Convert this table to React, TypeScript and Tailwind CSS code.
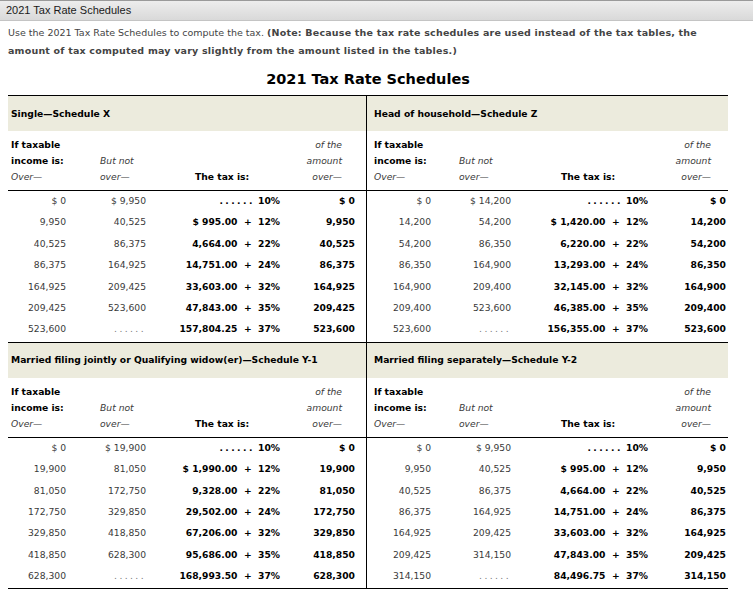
import React from "react";

type Row = [string, string, string, string | null, string];

const single: Row[] = [
  ["$ 0", "$ 9,950", "", "10%", "$ 0"],
  ["9,950", "40,525", "$ 995.00", "12%", "9,950"],
  ["40,525", "86,375", "4,664.00", "22%", "40,525"],
  ["86,375", "164,925", "14,751.00", "24%", "86,375"],
  ["164,925", "209,425", "33,603.00", "32%", "164,925"],
  ["209,425", "523,600", "47,843.00", "35%", "209,425"],
  ["523,600", "", "157,804.25", "37%", "523,600"],
];

const head: Row[] = [
  ["$ 0", "$ 14,200", "", "10%", "$ 0"],
  ["14,200", "54,200", "$ 1,420.00", "12%", "14,200"],
  ["54,200", "86,350", "6,220.00", "22%", "54,200"],
  ["86,350", "164,900", "13,293.00", "24%", "86,350"],
  ["164,900", "209,400", "32,145.00", "32%", "164,900"],
  ["209,400", "523,600", "46,385.00", "35%", "209,400"],
  ["523,600", "", "156,355.00", "37%", "523,600"],
];

const joint: Row[] = [
  ["$ 0", "$ 19,900", "", "10%", "$ 0"],
  ["19,900", "81,050", "$ 1,990.00", "12%", "19,900"],
  ["81,050", "172,750", "9,328.00", "22%", "81,050"],
  ["172,750", "329,850", "29,502.00", "24%", "172,750"],
  ["329,850", "418,850", "67,206.00", "32%", "329,850"],
  ["418,850", "628,300", "95,686.00", "35%", "418,850"],
  ["628,300", "", "168,993.50", "37%", "628,300"],
];

const separate: Row[] = [
  ["$ 0", "$ 9,950", "", "10%", "$ 0"],
  ["9,950", "40,525", "$ 995.00", "12%", "9,950"],
  ["40,525", "86,375", "4,664.00", "22%", "40,525"],
  ["86,375", "164,925", "14,751.00", "24%", "86,375"],
  ["164,925", "209,425", "33,603.00", "32%", "164,925"],
  ["209,425", "314,150", "47,843.00", "35%", "209,425"],
  ["314,150", "", "84,496.75", "37%", "314,150"],
];

const layouts = {
  left: {
    cell: "border-r border-black",
    pad: "pl-[3px] pr-[12px]",
    cols: "grid grid-cols-[55px_80px_134px_75px]",
    butNot: "pl-[34px]",
    taxIs: "pl-[49px]",
    ofThe: "pr-[13px]",
  },
  right: {
    cell: "",
    pad: "pl-[7px] pr-[2px]",
    cols: "grid grid-cols-[57px_80px_137px_78px]",
    butNot: "pl-[28px]",
    taxIs: "pl-[50px]",
    ofThe: "pr-[15px]",
  },
};

function Schedule({
  title,
  rows,
  side,
  last,
}: {
  title: string;
  rows: Row[];
  side: "left" | "right";
  last?: boolean;
}) {
  const l = layouts[side];
  return (
    <div className={`border-t border-black ${last ? "border-b" : ""} ${l.cell}`}>
      {/* Title band */}
      <div className={`h-[35px] bg-[#ecebdd] flex items-center font-bold text-black ${l.pad}`}>
        {title}
      </div>

      {/* Column headers */}
      <div className={`${l.cols} ${l.pad} pt-[5px] pb-[6px] border-b border-black`}>
        <div className="font-bold text-black h-[17px] leading-[17px]">If taxable</div>
        <div />
        <div />
        <div className={`italic text-right h-[17px] leading-[17px] ${l.ofThe}`}>of the</div>

        <div className="font-bold text-black h-[16px] leading-[16px]">income is:</div>
        <div className={`italic h-[16px] leading-[16px] ${l.butNot}`}>But not</div>
        <div />
        <div className={`italic text-right h-[16px] leading-[16px] ${l.ofThe}`}>amount</div>

        <div className="italic h-[15px] leading-[15px]">Over—</div>
        <div className={`italic h-[15px] leading-[15px] ${l.butNot}`}>over—</div>
        <div className={`font-bold text-black h-[15px] leading-[15px] ${l.taxIs}`}>The tax is:</div>
        <div className={`italic text-right h-[15px] leading-[15px] ${l.ofThe}`}>over—</div>
      </div>

      {/* Brackets */}
      <div className={`${l.pad} pb-[1px]`}>
        {rows.map((r, i) => (
          <div key={i} className={`${l.cols} h-[21.4px] leading-[19px]`}>
            <div className="text-right">{r[0]}</div>
            <div className="text-right">
              {r[1] ? r[1] : <span className="tracking-[2.4px] text-[#777]">......</span>}
            </div>
            <div className="text-right font-bold text-black whitespace-pre">
              {r[2] ? (
                `${r[2]}  +  ${r[3]}`
              ) : (
                <>
                  <span className="tracking-[2.4px]">......</span> {r[3]}
                </>
              )}
            </div>
            <div className="text-right font-bold text-black">{r[4]}</div>
          </div>
        ))}
      </div>
    </div>
  );
}

export default function App() {
  return (
    <div className="min-h-screen bg-white text-[#3a3a3a] text-[9.2px] font-['DejaVu_Sans',Verdana,sans-serif]">
      {/* Window title bar */}
      <div className="h-[21px] border-t border-[#9a9a9a] border-b border-b-[#c4c4c4] bg-gradient-to-b from-[#ededed] to-[#d9d9d9] flex items-center pl-[6px] text-[11px] text-[#1a1a1a] font-['Liberation_Sans',Arial,sans-serif]">
        2021 Tax Rate Schedules
      </div>

      <p className="px-2 pt-[3px] leading-[18px] text-[9.5px] text-[#444]">
        Use the 2021 Tax Rate Schedules to compute the tax.{" "}
        <span className="font-bold tracking-[0.2px]">
          (Note: Because the tax rate schedules are used instead of the tax tables, the
          <br />
          amount of tax computed may vary slightly from the amount listed in the tables.)
        </span>
      </p>

      <div className="ml-2 w-[720px]">
        <h2 className="mt-[10px] text-center font-bold text-black text-[14.5px] leading-[19px]">
          2021 Tax Rate Schedules
        </h2>

        <div className="mt-[6px] grid grid-cols-[359px_361px]">
          <Schedule title="Single—Schedule X" rows={single} side="left" />
          <Schedule title="Head of household—Schedule Z" rows={head} side="right" />
          <Schedule
            title="Married filing jointly or Qualifying widow(er)—Schedule Y-1"
            rows={joint}
            side="left"
            last
          />
          <Schedule
            title="Married filing separately—Schedule Y-2"
            rows={separate}
            side="right"
            last
          />
        </div>
      </div>
    </div>
  );
}
